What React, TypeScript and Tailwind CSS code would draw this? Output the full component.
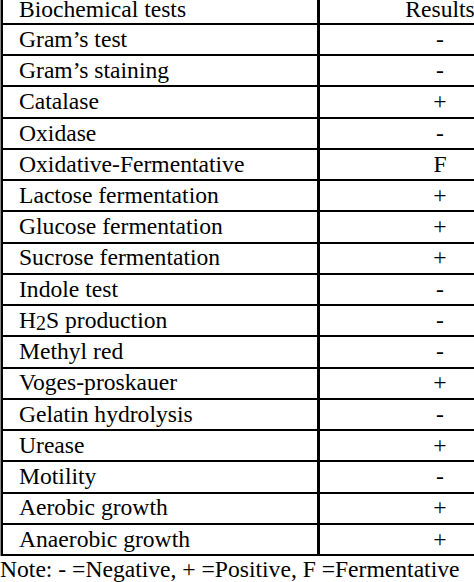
import React from "react";

const rows: [React.ReactNode, string][] = [
  ["Gram\u2019s test", "-"],
  ["Gram\u2019s staining", "-"],
  ["Catalase", "+"],
  ["Oxidase", "-"],
  ["Oxidative-Fermentative", "F"],
  ["Lactose fermentation", "+"],
  ["Glucose fermentation", "+"],
  ["Sucrose fermentation", "+"],
  ["Indole test", "-"],
  [
    <>
      H<span className="relative top-[2px] text-[20px]">2</span>S production
    </>,
    "-",
  ],
  ["Methyl red", "-"],
  ["Voges-proskauer", "+"],
  ["Gelatin hydrolysis", "-"],
  ["Urease", "+"],
  ["Motility", "-"],
  ["Aerobic growth", "+"],
  ["Anaerobic growth", "+"],
];

export default function App() {
  return (
    <div
      className="w-[474px] h-[582px] overflow-hidden bg-white text-black text-[23.6px]"
      style={{ fontFamily: '"Liberation Serif", "Times New Roman", serif' }}
    >
      <div className="w-[560px] border-l border-[#8a8a8a]">
        <div className="border-l-2 border-black">
          <div className="flex h-[25px] border-b-2 border-black">
            <div className="w-[314px] pl-[16px] pt-[1px] leading-[16px] whitespace-nowrap">
              Biochemical tests
            </div>
            <div className="w-[3px] bg-black" />
            <div className="flex-1 pt-[1px] text-center leading-[16px]">Results</div>
          </div>
          {rows.map(([name, res], i) => (
            <div key={i} className="flex h-[31.24px] border-b-2 border-black">
              <div className="w-[314px] pl-[16px] flex items-center leading-none whitespace-nowrap">
                {name}
              </div>
              <div className="w-[3px] bg-black" />
              <div className="flex-1 flex items-center justify-center leading-none">{res}</div>
            </div>
          ))}
        </div>
      </div>
      <div className="leading-[27px] whitespace-nowrap">
        Note: - =Negative, + =Positive, F =Fermentative
      </div>
    </div>
  );
}
